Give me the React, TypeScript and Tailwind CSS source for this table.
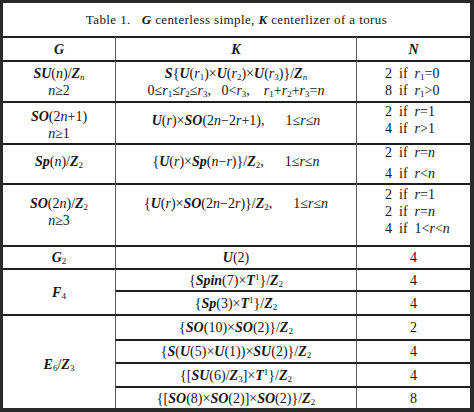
import React from "react";

type C = { children?: React.ReactNode };
const B = ({ children }: C) => <span className="font-bold italic">{children}</span>;
const I = ({ children }: C) => <span className="italic">{children}</span>;
const S = ({ children }: C) => <sub className="text-[9px]">{children}</sub>;
const Sp = ({ children }: C) => <sup className="text-[9px]">{children}</sup>;

const cellBase = "flex items-center justify-center border-t-2 border-[#1e1e1e]";
const kBase = cellBase + " border-l border-l-[#5a5a5a]";
const nList = "flex flex-col border-t-2 border-[#1e1e1e] border-l border-l-[#5a5a5a] pl-[28px] whitespace-pre";

export default function App() {
  return (
    <div className="w-[474px] h-[412px] bg-white text-[#151515] text-[14px] leading-[17px] overflow-hidden" style={{ fontFamily: '"Liberation Serif", "DejaVu Serif", serif' }}>
      <div className="w-[474px] h-[412px] border-l-[3px] border-t-[3px] border-r-[4px] border-b-[4px] border-[#2a2a2a] flex flex-col">
        <div className="h-[33px] flex items-center justify-center text-[13px] tracking-[0.4px]">
          <span className="whitespace-pre">
            Table 1.   <B>G</B> centerless simple, <B>K</B> centerlizer of a torus
          </span>
        </div>
        <div className="grid grid-cols-[112px_241px_1fr] grid-rows-[24px_41px_42px_40px_62px_23px_22px_24px_25px_23px_24px_22px] flex-1">
          {/* header */}
          <div className={cellBase}><B>G</B></div>
          <div className={kBase}><B>K</B></div>
          <div className={kBase}><B>N</B></div>

          {/* SU(n) */}
          <div className={cellBase + " flex-col"}>
            <div><B>SU</B>(<I>n</I>)/<B>Z</B><S><I>n</I></S></div>
            <div><I>n</I>≥2</div>
          </div>
          <div className={kBase + " flex-col"}>
            <div><B>S</B>{"{"}<B>U</B>(<I>r</I><S>1</S>)×<B>U</B>(<I>r</I><S>2</S>)×<B>U</B>(<I>r</I><S>3</S>){"}"}/<B>Z</B><S><I>n</I></S></div>
            <div className="whitespace-pre">0≤<I>r</I><S>1</S>≤<I>r</I><S>2</S>≤<I>r</I><S>3</S>,   0&lt;<I>r</I><S>3</S>,    <I>r</I><S>1</S>+<I>r</I><S>2</S>+<I>r</I><S>3</S>=<I>n</I></div>
          </div>
          <div className={nList + " justify-center"}>
            <div>2  if  <I>r</I><S>1</S>=0</div>
            <div>8  if  <I>r</I><S>1</S>&gt;0</div>
          </div>

          {/* SO(2n+1) */}
          <div className={cellBase + " flex-col pt-[3px]"}>
            <div><B>SO</B>(2<I>n</I>+1)</div>
            <div><I>n</I>≥1</div>
          </div>
          <div className={kBase + " whitespace-pre pb-[5px]"}>
            <div><B>U</B>(<I>r</I>)×<B>SO</B>(2<I>n</I>−2<I>r</I>+1),      1≤<I>r</I>≤<I>n</I></div>
          </div>
          <div className={nList + " leading-[15px] pt-[1px]"}>
            <div>2  if  <I>r</I>=1</div>
            <div className="mt-[2px]">4  if  <I>r</I>&gt;1</div>
          </div>

          {/* Sp(n) */}
          <div className={cellBase + " pb-[6px]"}>
            <div><B>Sp</B>(<I>n</I>)/<B>Z</B><S>2</S></div>
          </div>
          <div className={kBase + " whitespace-pre pb-[6px]"}>
            <div>{"{"}<B>U</B>(<I>r</I>)×<B>Sp</B>(<I>n</I>−<I>r</I>){"}"}/<B>Z</B><S>2</S>,      1≤<I>r</I>≤<I>n</I></div>
          </div>
          <div className={nList + " leading-[14px] pt-[1px]"}>
            <div>2  if  <I>r</I>=<I>n</I></div>
            <div className="mt-[7px]">4  if  <I>r</I>&lt;<I>n</I></div>
          </div>

          {/* SO(2n) */}
          <div className={cellBase + " flex-col pb-[6px]"}>
            <div><B>SO</B>(2<I>n</I>)/<B>Z</B><S>2</S></div>
            <div><I>n</I>≥3</div>
          </div>
          <div className={kBase + " whitespace-pre pb-[24px]"}>
            <div>{"{"}<B>U</B>(<I>r</I>)×<B>SO</B>(2<I>n</I>−2<I>r</I>){"}"}/<B>Z</B><S>2</S>,      1≤<I>r</I>≤<I>n</I></div>
          </div>
          <div className={nList + " pt-[1px]"}>
            <div>2  if  <I>r</I>=1</div>
            <div>2  if  <I>r</I>=<I>n</I></div>
            <div>4  if  1&lt;<I>r</I>&lt;<I>n</I></div>
          </div>

          {/* G2 */}
          <div className={cellBase}><div><B>G</B><S>2</S></div></div>
          <div className={kBase}><div><B>U</B>(2)</div></div>
          <div className={kBase}>4</div>

          {/* F4 */}
          <div className={cellBase + " row-span-2"}><div><B>F</B><S>4</S></div></div>
          <div className={kBase}><div>{"{"}<B>Spin</B>(7)×<B>T</B><Sp>1</Sp>{"}"}/<B>Z</B><S>2</S></div></div>
          <div className={kBase}>4</div>
          <div className={kBase + " col-start-2"}><div>{"{"}<B>Sp</B>(3)×<B>T</B><Sp>1</Sp>{"}"}/<B>Z</B><S>2</S></div></div>
          <div className={kBase}>4</div>

          {/* E6 */}
          <div className={cellBase + " row-span-4 pt-[4px]"}><div><B>E</B><S>6</S>/<B>Z</B><S>3</S></div></div>
          <div className={kBase}><div>{"{"}<B>SO</B>(10)×<B>SO</B>(2){"}"}/<B>Z</B><S>2</S></div></div>
          <div className={kBase}>2</div>
          <div className={kBase + " col-start-2"}><div>{"{"}<B>S</B>(<B>U</B>(5)×<B>U</B>(1))×<B>SU</B>(2){"}"}/<B>Z</B><S>2</S></div></div>
          <div className={kBase}>4</div>
          <div className={kBase + " col-start-2"}><div>{"{"}[<B>SU</B>(6)/<B>Z</B><S>3</S>]×<B>T</B><Sp>1</Sp>{"}"}/<B>Z</B><S>2</S></div></div>
          <div className={kBase}>4</div>
          <div className={kBase + " col-start-2"}><div>{"{"}[<B>SO</B>(8)×<B>SO</B>(2)]×<B>SO</B>(2){"}"}/<B>Z</B><S>2</S></div></div>
          <div className={kBase}>8</div>
        </div>
      </div>
    </div>
  );
}
